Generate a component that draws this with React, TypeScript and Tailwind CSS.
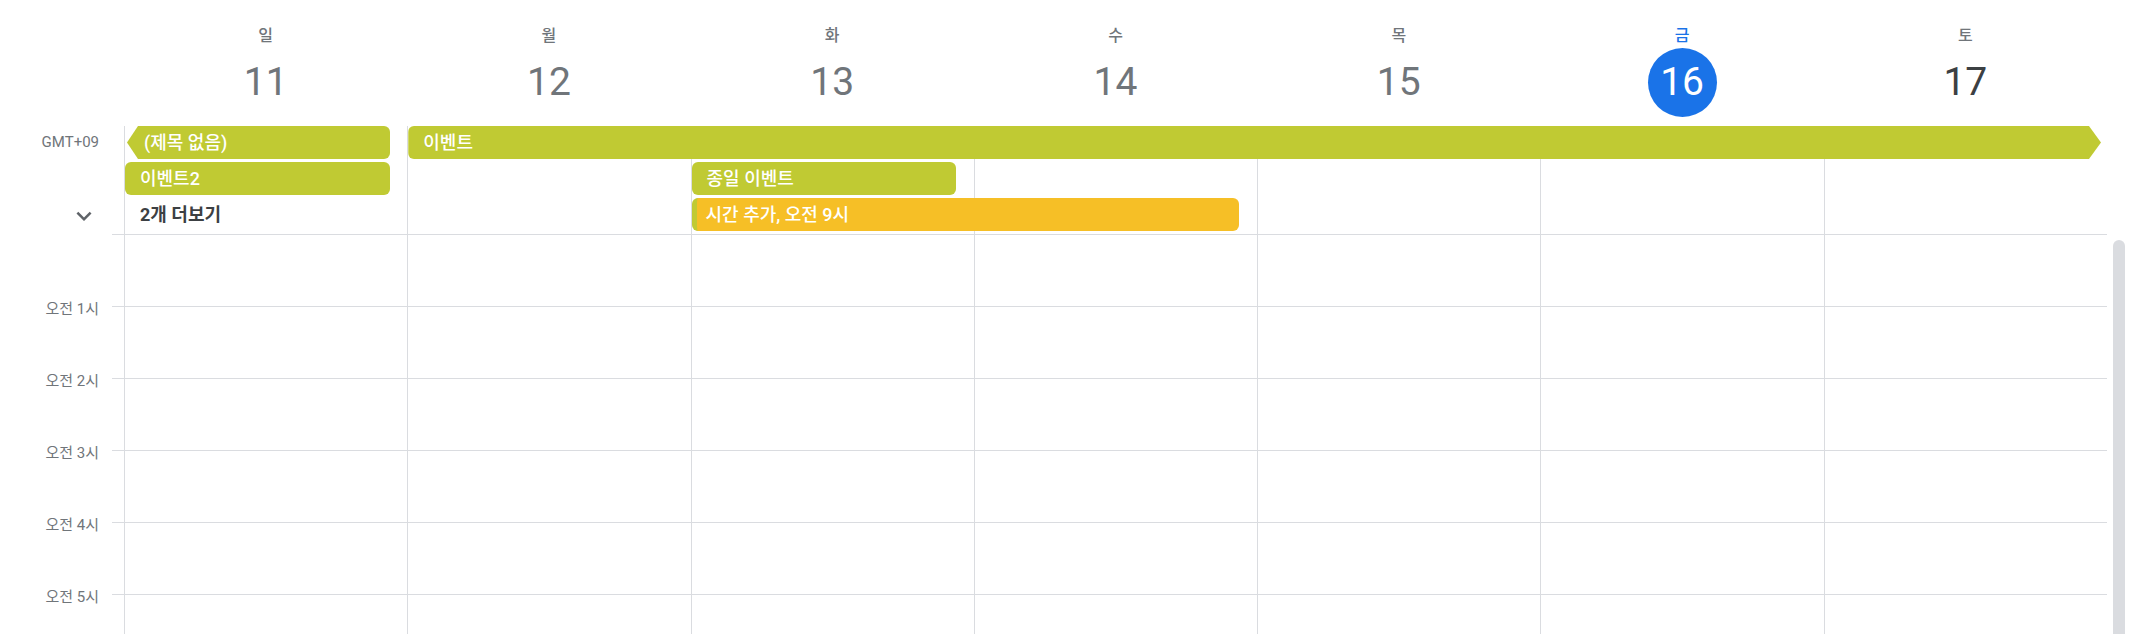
import React from 'react';

type Day = { name: string; num: number; kind: 'past' | 'today' | 'future' };

const days: Day[] = [
  { name: '일', num: 11, kind: 'past' },
  { name: '월', num: 12, kind: 'past' },
  { name: '화', num: 13, kind: 'past' },
  { name: '수', num: 14, kind: 'past' },
  { name: '목', num: 15, kind: 'past' },
  { name: '금', num: 16, kind: 'today' },
  { name: '토', num: 17, kind: 'future' },
];

const colStarts = [
  'col-start-1',
  'col-start-2',
  'col-start-3',
  'col-start-4',
  'col-start-5',
  'col-start-6',
  'col-start-7',
];

const hours = ['', '오전 1시', '오전 2시', '오전 3시', '오전 4시', '오전 5시'];

function Chevron() {
  return (
    <svg width="30" height="30" viewBox="0 0 24 24" fill="#5f6368">
      <path d="M16.59 8.59L12 13.17 7.41 8.59 6 10l6 6 6-6z" />
    </svg>
  );
}

export default function App() {
  return (
    <div className="h-[634px] w-[2131px] overflow-hidden bg-white font-['Roboto','Noto_Sans_CJK_KR',sans-serif]">
      {/* Header */}
      <div className="flex h-[126px]">
        <div className="w-[124px] shrink-0" />
        <div className="grid w-[1983px] shrink-0 grid-cols-7">
          {days.map((d) => (
            <div key={d.num} className="flex flex-col items-center pt-[26px]">
              <div
                className={
                  'text-[16px] leading-[20px] font-medium ' +
                  (d.kind === 'today' ? 'text-[#1a73e8]' : 'text-[#70757a]')
                }
              >
                {d.name}
              </div>
              <div
                className={
                  'mt-[2px] flex h-[69px] w-[69px] items-center justify-center rounded-full text-[39px] leading-none ' +
                  (d.kind === 'today'
                    ? 'bg-[#1a73e8] text-white'
                    : d.kind === 'future'
                    ? 'text-[#3c4043]'
                    : 'text-[#70757a]')
                }
              >
                {d.num}
              </div>
            </div>
          ))}
        </div>
        <div className="w-[24px] shrink-0" />
      </div>

      {/* All-day section */}
      <div className="flex h-[108px]">
        <div className="flex w-[124px] shrink-0 flex-col">
          <div className="flex h-[33px] items-center justify-end pr-[25px] text-[15px] text-[#70757a]">
            GMT+09
          </div>
          <div className="flex-1" />
          <div className="mb-[3px] flex h-[30px] justify-end pr-[25px]">
            <Chevron />
          </div>
        </div>
        <div className="grid w-[1983px] shrink-0 grid-cols-7 grid-rows-[33px_33px_33px_0px] gap-y-[3px]">
          {colStarts.map((c) => (
            <div key={c} className={c + ' row-start-1 row-end-5 border-l border-[#dadce0]'} />
          ))}

          {/* (제목 없음) */}
          <div className="col-start-1 row-start-1 mr-[17px] ml-[3px] flex items-center rounded-r-[6px] bg-[#c0ca33] pl-[17px] text-[18px] font-medium whitespace-nowrap text-white [clip-path:polygon(11px_0,100%_0,100%_100%,11px_100%,0_50%)]">
            (제목 없음)
          </div>

          {/* 이벤트 */}
          <div className="col-start-2 col-span-6 row-start-1 mr-[6px] ml-[1px] flex items-center rounded-l-[6px] bg-[#c0ca33] pl-[15px] text-[18px] font-medium whitespace-nowrap text-white [clip-path:polygon(0_0,calc(100%-12px)_0,100%_50%,calc(100%-12px)_100%,0_100%)]">
            이벤트
          </div>

          {/* 이벤트2 */}
          <div className="col-start-1 row-start-2 mr-[17px] ml-[1px] flex items-center rounded-[6px] bg-[#c0ca33] pl-[15px] text-[18px] font-medium whitespace-nowrap text-white">
            이벤트2
          </div>

          {/* 종일 이벤트 */}
          <div className="col-start-3 row-start-2 mr-[18px] ml-[1px] flex items-center rounded-[6px] bg-[#c0ca33] pl-[15px] text-[18px] font-medium whitespace-nowrap text-white">
            종일 이벤트
          </div>

          {/* 2개 더보기 */}
          <div className="col-start-1 row-start-3 flex items-center pl-[16px] text-[18px] font-bold whitespace-nowrap text-[#3c4043]">
            2개 더보기
          </div>

          {/* 시간 추가 */}
          <div className="col-start-3 col-span-2 row-start-3 mr-[18px] ml-[1px] flex items-center rounded-[6px] border-l-[5px] border-[#c0ca33] bg-[#f6bf26] pl-[9px] text-[18px] font-medium whitespace-nowrap text-white">
            시간 추가, 오전 9시
          </div>
        </div>
        <div className="w-[24px] shrink-0" />
      </div>

      {/* All-day bottom border */}
      <div className="flex">
        <div className="w-[112px] shrink-0" />
        <div className="h-px w-[1995px] shrink-0 bg-[#dadce0]" />
        <div className="w-[24px] shrink-0" />
      </div>

      {/* Body */}
      <div className="flex">
        <div className="flex w-[2107px] shrink-0 flex-col">
          {hours.map((h, i) => (
            <div key={i} className="flex h-[72px] shrink-0">
              <div className="w-[112px] shrink-0 pr-[13px] text-right">
                {h && (
                  <div className="-mt-[7px] text-[15px] leading-[18px] whitespace-nowrap text-[#70757a]">{h}</div>
                )}
              </div>
              <div className="w-[12px] shrink-0 border-b border-[#dadce0]" />
              <div className="grid w-[1983px] shrink-0 grid-cols-7">
                {days.map((d) => (
                  <div key={d.num} className="border-b border-l border-[#dadce0]" />
                ))}
              </div>
            </div>
          ))}
        </div>
        <div className="w-[24px] shrink-0">
          <div className="mt-[5px] ml-[6px] h-[600px] w-[12px] rounded-full bg-[#dadce0]" />
        </div>
      </div>
    </div>
  );
}
